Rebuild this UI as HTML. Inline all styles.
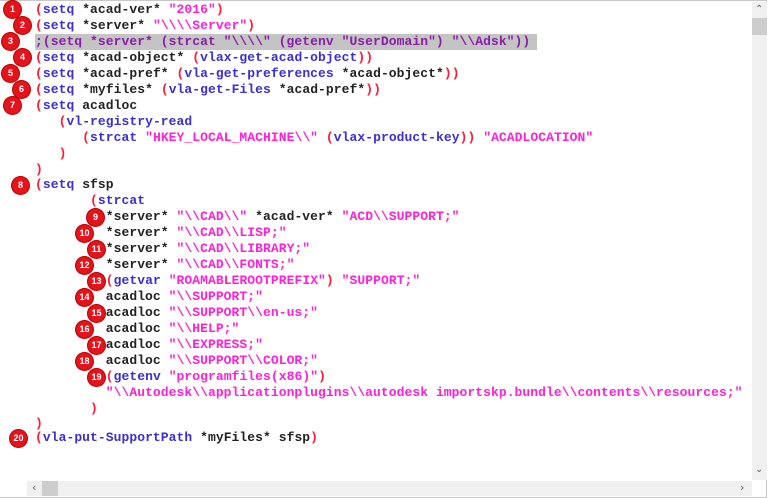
<!DOCTYPE html>
<html><head><meta charset="utf-8"><style>
body{margin:0;width:768px;height:498px;background:#fff;position:relative;overflow:hidden;font-family:"Liberation Mono",monospace;}
.frame{position:absolute;left:0;top:0;width:766px;height:496px;border:1px solid #c8c8c8;border-left:none}
.l{position:absolute;left:35px;font-size:13px;line-height:16px;white-space:pre;color:#222;font-weight:bold;letter-spacing:0.06px}
.k{color:#3a2fd0}.p{color:#ff1a3a}.s{color:#ff20d8}.c{color:#8a1ca8}
.b{position:absolute;width:17px;height:17px;margin:-1px 0 0 -1px;border-radius:50%;background:#e3141c;color:#fff;font:bold 9px "Liberation Sans",sans-serif;text-align:center;line-height:17px;box-shadow:0 0 0 1px #b00}
.vs{position:absolute;left:752px;top:2px;width:15px;height:478px;background:#f0f0f0}
.hs{position:absolute;left:27px;top:481px;width:725px;height:15px;background:#f0f0f0}
</style></head><body>
<div class="frame"></div>
<div style="position:absolute;left:35px;top:34px;width:502px;height:16px;background:#c4c4c4"></div>
<div class="l" style="top:2px"><span class="p">(</span><span class="k">setq</span> *acad-ver* <span class="s">"2016"</span><span class="p">)</span></div>
<div class="l" style="top:18px"><span class="p">(</span><span class="k">setq</span> *server* <span class="s">"\\\\Server"</span><span class="p">)</span></div>
<div class="l c" style="top:34px">;(setq *server* (strcat "\\\\" (getenv "UserDomain") "\\Adsk"))</div>
<div class="l" style="top:50px"><span class="p">(</span><span class="k">setq</span> *acad-object* <span class="p">(</span><span class="k">vlax-get-acad-object</span><span class="p">))</span></div>
<div class="l" style="top:66px"><span class="p">(</span><span class="k">setq</span> *acad-pref* <span class="p">(</span><span class="k">vla-get-preferences</span> *acad-object*<span class="p">))</span></div>
<div class="l" style="top:82px"><span class="p">(</span><span class="k">setq</span> *myfiles* <span class="p">(</span><span class="k">vla-get-Files</span> *acad-pref*<span class="p">))</span></div>
<div class="l" style="top:98px"><span class="p">(</span><span class="k">setq</span> acadloc</div>
<div class="l" style="top:114px">   <span class="p">(</span><span class="k">vl-registry-read</span></div>
<div class="l" style="top:130px">      <span class="p">(</span><span class="k">strcat</span> <span class="s">"HKEY_LOCAL_MACHINE\\"</span> <span class="p">(</span><span class="k">vlax-product-key</span><span class="p">)</span><span class="p">)</span> <span class="s">"ACADLOCATION"</span></div>
<div class="l" style="top:146px">   <span class="p">)</span></div>
<div class="l" style="top:162px"><span class="p">)</span></div>
<div class="l" style="top:177px"><span class="p">(</span><span class="k">setq</span> sfsp</div>
<div class="l" style="top:193px">       <span class="p">(</span><span class="k">strcat</span></div>
<div class="l" style="top:209px">         *server* <span class="s">"\\CAD\\"</span> *acad-ver* <span class="s">"ACD\\SUPPORT;"</span></div>
<div class="l" style="top:225px">         *server* <span class="s">"\\CAD\\LISP;"</span></div>
<div class="l" style="top:241px">         *server* <span class="s">"\\CAD\\LIBRARY;"</span></div>
<div class="l" style="top:257px">         *server* <span class="s">"\\CAD\\FONTS;"</span></div>
<div class="l" style="top:273px">         <span class="p">(</span><span class="k">getvar</span> <span class="s">"ROAMABLEROOTPREFIX"</span><span class="p">)</span> <span class="s">"SUPPORT;"</span></div>
<div class="l" style="top:289px">         acadloc <span class="s">"\\SUPPORT;"</span></div>
<div class="l" style="top:305px">         acadloc <span class="s">"\\SUPPORT\\en-us;"</span></div>
<div class="l" style="top:321px">         acadloc <span class="s">"\\HELP;"</span></div>
<div class="l" style="top:337px">         acadloc <span class="s">"\\EXPRESS;"</span></div>
<div class="l" style="top:353px">         acadloc <span class="s">"\\SUPPORT\\COLOR;"</span></div>
<div class="l" style="top:369px">         <span class="p">(</span><span class="k">getenv</span> <span class="s">"programfiles(x86)"</span><span class="p">)</span></div>
<div class="l" style="top:385px">         <span class="s">"\\Autodesk\\applicationplugins\\autodesk importskp.bundle\\contents\\resources;"</span></div>
<div class="l" style="top:401px">       <span class="p">)</span></div>
<div class="l" style="top:416px"><span class="p">)</span></div>
<div class="l" style="top:430px"><span class="p">(</span><span class="k">vla-put-SupportPath</span> *myFiles* sfsp<span class="p">)</span></div>

<div class="b" style="left:5px;top:2px">1</div>
<div class="b" style="left:15px;top:18px">2</div>
<div class="b" style="left:3px;top:34px">3</div>
<div class="b" style="left:15px;top:50px">4</div>
<div class="b" style="left:3px;top:66px">5</div>
<div class="b" style="left:14px;top:82px">6</div>
<div class="b" style="left:5px;top:98px">7</div>
<div class="b" style="left:13px;top:178px">8</div>
<div class="b" style="left:88px;top:210px">9</div>
<div class="b" style="left:77px;top:226px">10</div>
<div class="b" style="left:89px;top:242px">11</div>
<div class="b" style="left:77px;top:258px">12</div>
<div class="b" style="left:89px;top:274px">13</div>
<div class="b" style="left:77px;top:290px">14</div>
<div class="b" style="left:89px;top:306px">15</div>
<div class="b" style="left:77px;top:322px">16</div>
<div class="b" style="left:89px;top:338px">17</div>
<div class="b" style="left:77px;top:354px">18</div>
<div class="b" style="left:89px;top:370px">19</div>
<div class="b" style="left:11px;top:431px">20</div>

<div class="vs">
 <div style="position:absolute;left:0;top:16px;width:15px;height:17px;background:#cdcdcd"></div>
 <div style="position:absolute;left:3px;top:2px;font:10px 'DejaVu Sans';color:#606060">&#8963;</div>
 <div style="position:absolute;left:3px;top:462px;font:10px 'DejaVu Sans';color:#606060">&#8964;</div>
</div>
<div class="hs">
 <div style="position:absolute;left:15px;top:0;width:16px;height:15px;background:#cdcdcd"></div>
 <div style="position:absolute;left:5px;top:0;font:11px 'DejaVu Sans';color:#606060">&#8249;</div>
 <div style="position:absolute;left:713px;top:0;font:11px 'DejaVu Sans';color:#606060">&#8250;</div>
</div>
</body></html>
